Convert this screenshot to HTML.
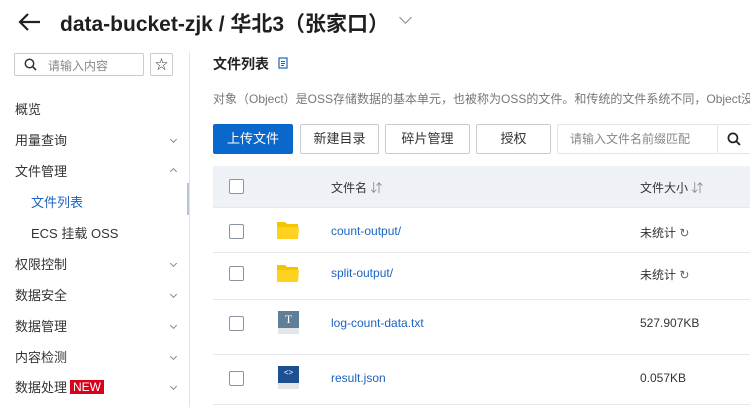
<!DOCTYPE html><html><head><meta charset="utf-8"><style>
*{margin:0;padding:0;box-sizing:border-box}
body{width:750px;height:407px;overflow:hidden;background:#fff;font-family:"Liberation Sans","Noto Sans CJK SC",sans-serif;color:#333;position:relative}
.a{position:absolute;white-space:nowrap}
.m{font-size:13px;color:#333;left:15px}
.ch{position:absolute;left:171px;width:5px;height:5px;border-right:1.2px solid #888;border-bottom:1.2px solid #888;transform:rotate(45deg)}
.btn{position:absolute;top:124px;height:30px;border:1px solid #c8ccd2;border-radius:2px;font-size:13px;line-height:28px;text-align:center;background:#fff;color:#333}
.cb{position:absolute;left:229px;width:15px;height:15px;border:1px solid #8a94a3;border-radius:2px;background:#fff}
.row{position:absolute;left:213px;right:0;border-bottom:1px solid #e6e8eb}
.lnk{position:absolute;left:331px;font-size:12px;color:#1b64c0}
.sz{position:absolute;left:640px;font-size:12px;color:#333}
</style></head><body>
<svg class="a" style="left:18px;top:12px" width="24" height="20" viewBox="0 0 24 20"><path d="M22 10H3M10 2L2 10l8 8" stroke="#222" stroke-width="2.2" fill="none"/></svg>
<div class="a" style="left:60px;top:8px;font-size:21px;font-weight:bold;color:#1f1f1f">data-bucket-zjk / 华北3（张家口）</div>
<div class="a" style="left:401px;top:13px;width:9px;height:9px;border-right:1.5px solid #888;border-bottom:1.5px solid #888;transform:rotate(45deg)"></div>
<div class="a" style="left:14px;top:53px;width:130px;height:23px;border:1px solid #c8ccd2;border-radius:2px"></div>
<svg class="a" style="left:24px;top:58px" width="13" height="13" viewBox="0 0 13 13"><circle cx="5.5" cy="5.5" r="4.2" stroke="#333" stroke-width="1.5" fill="none"/><path d="M8.5 8.5L12 12" stroke="#333" stroke-width="1.6"/></svg>
<div class="a" style="left:48px;top:57px;font-size:12px;color:#888">请输入内容</div>
<div class="a" style="left:150px;top:53px;width:23px;height:23px;border:1px solid #c8ccd2;border-radius:2px;font-size:13px;text-align:center;line-height:21px;color:#333">☆</div>
<div class="a" style="left:189px;top:52px;width:1px;height:355px;background:#e3e5e8"></div>
<div class="a" style="left:187px;top:183px;width:2px;height:32px;background:#b8c4d6"></div>
<div class="a m" style="top:99px">概览</div>
<div class="a m" style="top:130px">用量查询</div><div class="ch" style="top:137px"></div>
<div class="a m" style="top:161px">文件管理</div><div class="ch" style="top:169px;transform:rotate(225deg)"></div>
<div class="a m" style="top:192px;left:31px;color:#1b64c0">文件列表</div>
<div class="a m" style="top:223px;left:31px">ECS 挂载 OSS</div>
<div class="a m" style="top:254px">权限控制</div><div class="ch" style="top:261px"></div>
<div class="a m" style="top:285px">数据安全</div><div class="ch" style="top:292px"></div>
<div class="a m" style="top:316px">数据管理</div><div class="ch" style="top:323px"></div>
<div class="a m" style="top:347px">内容检测</div><div class="ch" style="top:354px"></div>
<div class="a m" style="top:377px">数据处理</div>
<div class="a" style="left:70px;top:380px;background:#d9001b;color:#fff;font-size:12px;padding:0 3px;line-height:14px;height:14px">NEW</div><div class="ch" style="top:384px"></div>
<div class="a" style="left:213px;top:54px;font-size:14px;font-weight:bold;color:#222">文件列表</div>
<svg class="a" style="left:278px;top:57px" width="10" height="12" viewBox="0 0 10 12"><rect x="1" y="1" width="8" height="10" stroke="#1b64c0" stroke-width="1.2" fill="none"/><path d="M3 4.5h4M3 6.5h4M3 8.5h3" stroke="#1b64c0"/></svg>
<div class="a" style="left:213px;top:90px;font-size:12px;color:#777">对象（Object）是OSS存储数据的基本单元，也被称为OSS的文件。和传统的文件系统不同，Object没有</div>
<div class="btn" style="left:213px;width:80px;background:#0a67cc;border-color:#0a67cc;color:#fff">上传文件</div>
<div class="btn" style="left:300px;width:79px">新建目录</div>
<div class="btn" style="left:385px;width:85px">碎片管理</div>
<div class="btn" style="left:476px;width:75px">授权</div>
<div class="btn" style="left:557px;width:161px;border-color:#e3e5e8;text-align:left;padding-left:12px;color:#888;font-size:12px">请输入文件名前缀匹配</div>
<div class="btn" style="left:717px;width:40px;border-color:#e3e5e8"></div>
<svg class="a" style="left:727px;top:132px" width="14" height="14" viewBox="0 0 13 13"><circle cx="5.5" cy="5.5" r="4.2" stroke="#222" stroke-width="1.6" fill="none"/><path d="M8.5 8.5L12 12" stroke="#222" stroke-width="1.7"/></svg>
<div class="row" style="top:166px;height:42px;background:#eef1f6"></div>
<div class="cb" style="top:179px"></div>
<div class="a" style="left:331px;top:179px;font-size:12px;color:#333">文件名 <span style="color:#888">⇵</span></div>
<div class="a" style="left:640px;top:179px;font-size:12px;color:#333">文件大小 <span style="color:#888">⇵</span></div>
<div class="row" style="top:208px;height:45px"></div>
<div class="row" style="top:253px;height:47px"></div>
<div class="row" style="top:300px;height:55px"></div>
<div class="row" style="top:355px;height:50px"></div>
<div class="cb" style="top:224px"></div><div class="cb" style="top:266px"></div><div class="cb" style="top:316px"></div><div class="cb" style="top:371px"></div>
<svg class="a" style="left:276px;top:219px" width="24" height="22" viewBox="0 0 24 22"><path d="M1 3h8l2 2h11v15H1z" fill="#f5c400"/><path d="M1 8h22l-1 12H1z" fill="#ffd21f"/></svg>
<svg class="a" style="left:276px;top:262px" width="24" height="22" viewBox="0 0 24 22"><path d="M1 3h8l2 2h11v15H1z" fill="#f5c400"/><path d="M1 8h22l-1 12H1z" fill="#ffd21f"/></svg>
<div class="a" style="left:278px;top:311px;width:21px;height:23px;background:#e3e5e8"><div style="height:17px;background:#5f7f99;color:#fff;font-family:'Liberation Serif',serif;font-size:12px;text-align:center;line-height:16px">T</div></div>
<div class="a" style="left:278px;top:366px;width:21px;height:23px;background:#e3e5e8"><div style="height:17px;background:#1d4f93;color:#fff;font-size:8px;text-align:center;line-height:14px">&lt;&gt;</div></div>
<div class="lnk" style="top:224px">count-output/</div>
<div class="lnk" style="top:266px">split-output/</div>
<div class="lnk" style="top:316px">log-count-data.txt</div>
<div class="lnk" style="top:371px">result.json</div>
<div class="sz" style="top:224px">未统计 <span style="color:#666">↻</span></div>
<div class="sz" style="top:266px">未统计 <span style="color:#666">↻</span></div>
<div class="sz" style="top:316px">527.907KB</div>
<div class="sz" style="top:371px">0.057KB</div>
</body></html>
